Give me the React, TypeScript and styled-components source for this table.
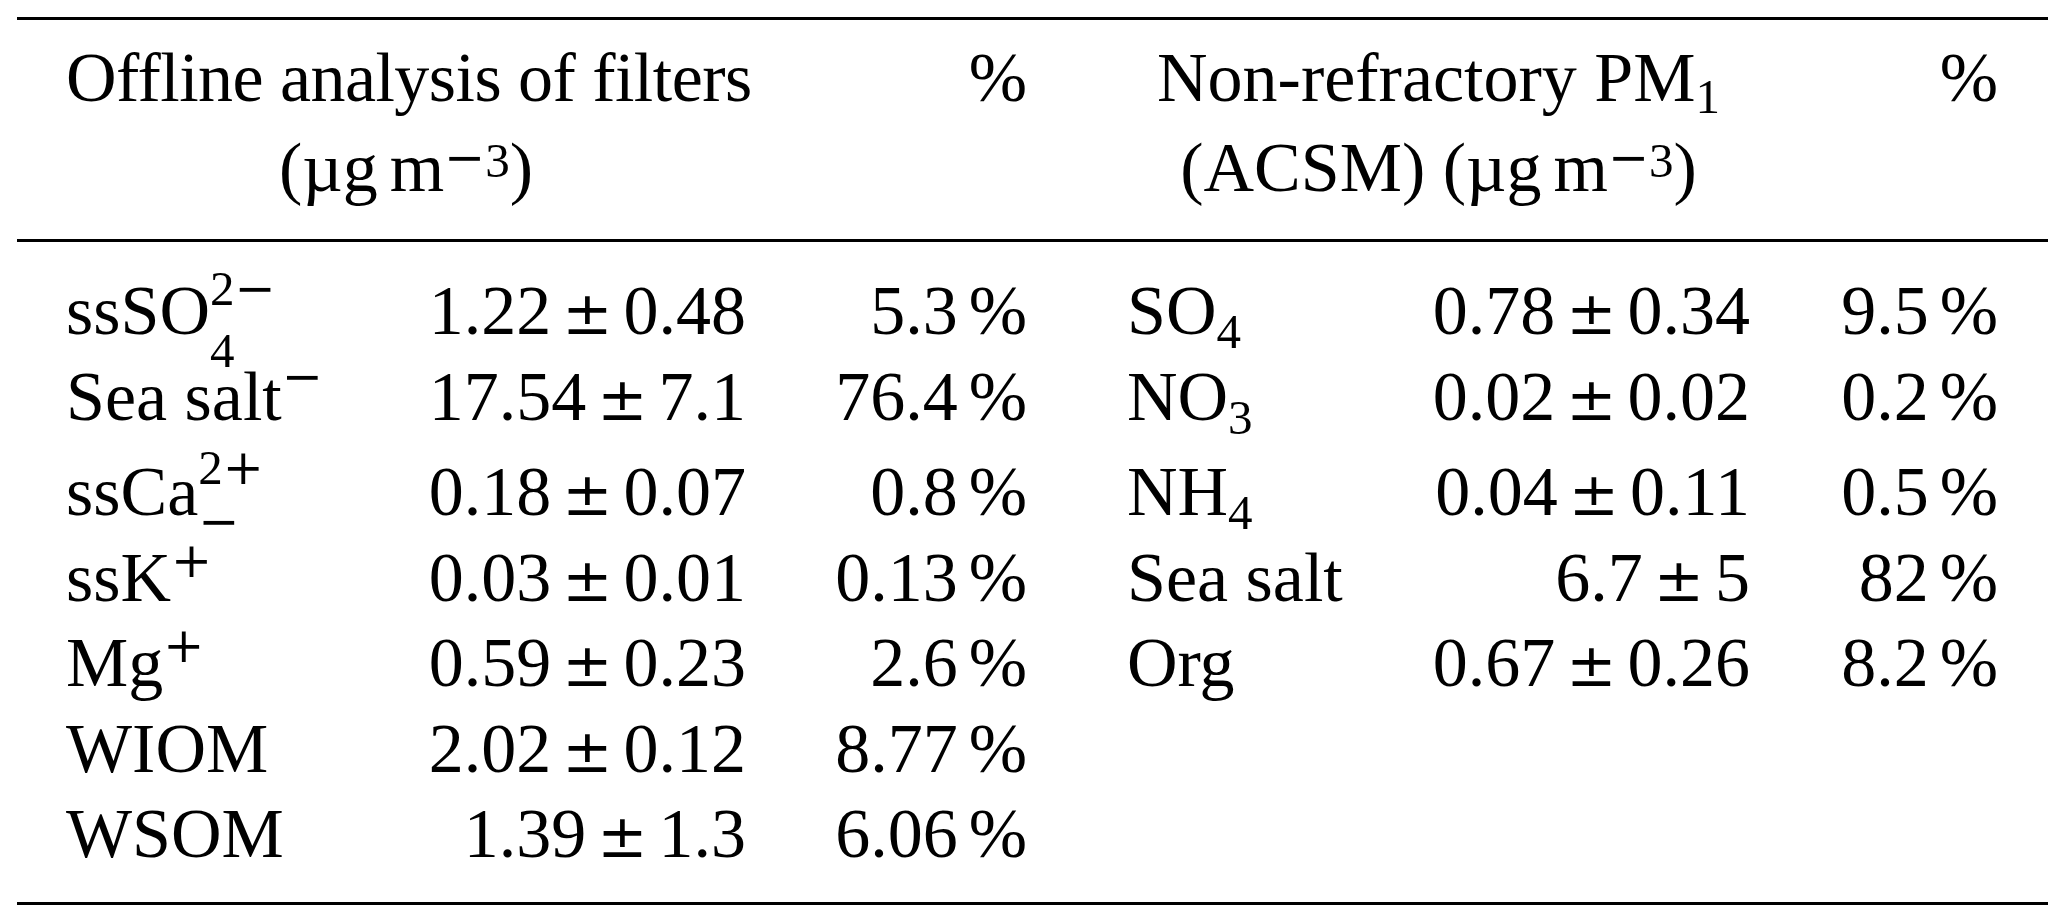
import React from "react";
import styled, {createGlobalStyle} from "styled-components";

const GlobalStyle = createGlobalStyle`
    html, body {
        margin: 0;
        padding: 0;
        background: #fff;
    }
    body {
        font-family: "Liberation Serif", "Times New Roman", serif;
        color: #000;
    }
`;

const COLS = "300px 380px 281px 100px 300px 323px 248px";

const Page = styled.div`
    padding: 17px 0 0 17px;
`;

const Table = styled.div`
    width: 2031px;
    font-size: 70px;
    border-top: 3px solid #000;
    border-bottom: 3px solid #000;
`;

const Head = styled.div`
    display: grid;
    grid-template-columns: ${COLS};
    line-height: 90px;
    padding: 13px 50px 26px 49px;
    border-bottom: 3px solid #000;
`;

const HeadTitle = styled.div<{$col: number}>`
    grid-column: ${p => p.$col} / span 2;
    text-align: center;
    white-space: nowrap;
`;

const HeadLine = styled.div<{$tight?: boolean}>`
    letter-spacing: ${p => (p.$tight ? "-0.55px" : "normal")};
`;

const HeadPct = styled.div<{$col: number}>`
    grid-column: ${p => p.$col};
    text-align: right;
`;

const Body = styled.div`
    padding: 26px 50px 25.5px 49px;
`;

const Row = styled.div<{$lift?: number}>`
    display: grid;
    grid-template-columns: ${COLS};
    line-height: 85.5px;
    padding-top: ${p => p.$lift ?? 0}px;
`;

const Label = styled.div`
    text-align: left;
    white-space: nowrap;
`;

const Num = styled.div`
    text-align: right;
    white-space: nowrap;
`;

// math-style plus/minus, wider than the text glyph
const Pm = styled.span`
    font-family: "DejaVu Serif", serif;
    font-size: 60px;
    line-height: 0;
    margin: 0 11px;
`;

const Sign = styled.span<{$lift?: number}>`
    font-family: "DejaVu Serif", serif;
    line-height: 0;
    vertical-align: ${p => p.$lift ?? 0}px;
`;

const Unit = styled.span`
    margin-left: 11px;
`;

const Sup = styled.span<{$raise?: number}>`
    font-size: 49px;
    line-height: 0;
    vertical-align: ${p => p.$raise ?? 26}px;
`;

const Sub = styled.span<{$drop?: number}>`
    font-size: 49px;
    line-height: 0;
    vertical-align: -${p => p.$drop ?? 14}px;
`;

// sup over sub, left aligned, like $_4^{2-}$
const Stack = styled.span<{$raise: number, $gap: number}>`
    display: inline-flex;
    flex-direction: column;
    align-items: flex-start;
    font-size: 49px;
    line-height: 0;
    gap: ${p => p.$gap}px;
    vertical-align: ${p => p.$raise}px;
`;

const MINUS = "\u2212";

interface Entry {
    label: React.ReactNode
    mean: string
    sd: string
    pct: string
}

const offline: Entry[] = [
    {
        label: <>ssSO<Stack $raise={29} $gap={62}><span>2<Sign>{MINUS}</Sign></span><span>4</span></Stack></>,
        mean: "1.22", sd: "0.48", pct: "5.3",
    },
    {label: <>Sea salt<Sup $raise={27}><Sign>{MINUS}</Sign></Sup></>, mean: "17.54", sd: "7.1", pct: "76.4"},
    {
        label: <>ssCa<Stack $raise={31} $gap={54}><span>2<Sign>+</Sign></span><span><Sign>{MINUS}</Sign></span></Stack></>,
        mean: "0.18", sd: "0.07", pct: "0.8",
    },
    {label: <>ssK<Sup $raise={24}><Sign>+</Sign></Sup></>, mean: "0.03", sd: "0.01", pct: "0.13"},
    {label: <>Mg<Sup $raise={24}><Sign>+</Sign></Sup></>, mean: "0.59", sd: "0.23", pct: "2.6"},
    {label: "WIOM", mean: "2.02", sd: "0.12", pct: "8.77"},
    {label: "WSOM", mean: "1.39", sd: "1.3", pct: "6.06"},
];

const acsm: Entry[] = [
    {label: <>SO<Sub>4</Sub></>, mean: "0.78", sd: "0.34", pct: "9.5"},
    {label: <>NO<Sub>3</Sub></>, mean: "0.02", sd: "0.02", pct: "0.2"},
    {label: <>NH<Sub>4</Sub></>, mean: "0.04", sd: "0.11", pct: "0.5"},
    {label: "Sea salt", mean: "6.7", sd: "5", pct: "82"},
    {label: "Org", mean: "0.67", sd: "0.26", pct: "8.2"},
];

const Cells = ({e}: {e?: Entry}) => {
    if (!e) {
        return <><Label/><Num/><Num/></>;
    }
    return (
        <>
            <Label>{e.label}</Label>
            <Num>{e.mean}<Pm>±</Pm>{e.sd}</Num>
            <Num>{e.pct}<Unit>%</Unit></Num>
        </>
    );
};

const ThinM = styled.span`
    margin-left: 12px;
`;

const Unit3 = () => (
    <>(µg<ThinM>m</ThinM><Sup $raise={14}><Sign $lift={3}>{MINUS}</Sign>3</Sup>)</>
);

export default function App() {
    return (
        <>
            <GlobalStyle/>
            <Page>
                <Table>
                    <Head>
                        <HeadTitle $col={1}>
                            <HeadLine $tight>Offline analysis of filters</HeadLine>
                            <HeadLine><Unit3/></HeadLine>
                        </HeadTitle>
                        <HeadPct $col={3}>%</HeadPct>
                        <HeadTitle $col={5}>
                            <HeadLine>Non-refractory PM<Sub $drop={12}>1</Sub></HeadLine>
                            <HeadLine>(ACSM) <Unit3/></HeadLine>
                        </HeadTitle>
                        <HeadPct $col={7}>%</HeadPct>
                    </Head>
                    <Body>
                        {offline.map((e, i) => (
                            <Row key={i} $lift={i === 2 ? 10 : 0}>
                                <Cells e={e}/>
                                <div/>
                                <Cells e={acsm[i]}/>
                            </Row>
                        ))}
                    </Body>
                </Table>
            </Page>
        </>
    );
}
